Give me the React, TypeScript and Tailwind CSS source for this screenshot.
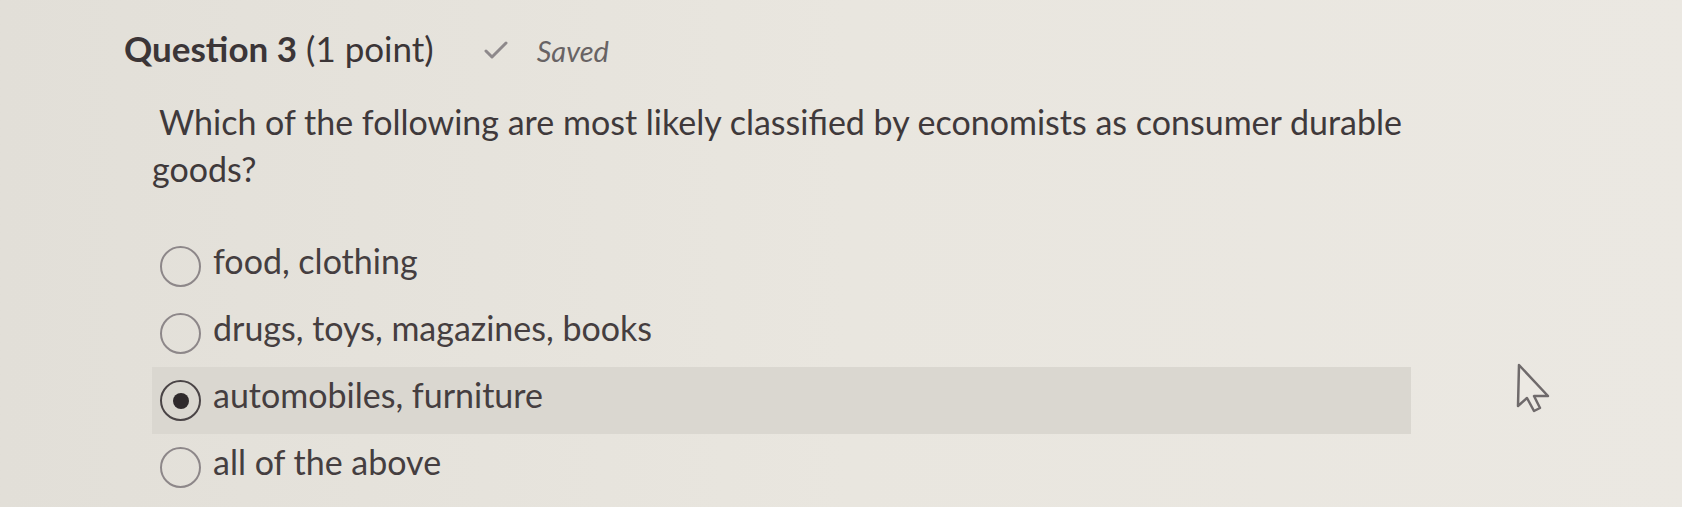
import { useState } from 'react'

const options = [
    'food, clothing',
    'drugs, toys, magazines, books',
    'automobiles, furniture',
    'all of the above',
]

function Radio({ checked }: { checked: boolean }) {
    return (
        <span
            className={
                'flex h-[41px] w-[41px] shrink-0 items-center justify-center rounded-full border-[2.5px] ' +
                (checked ? 'border-[#4a4446]' : 'border-[#8d8789]')
            }
        >
            {checked && <span className="h-[16px] w-[16px] rounded-full bg-[#2f2a2c]" />}
        </span>
    )
}

function Cursor() {
    return (
        <svg width="34" height="50" viewBox="0 0 34 50" className="absolute left-[1516px] top-[363px]">
            <path
                d="M3 2 L2 43 L11 35 L18 48 L24 45 L18 33 L32 33 Z"
                fill="#ece9e3"
                stroke="#6f6a6b"
                strokeWidth="2.5"
                strokeLinejoin="round"
            />
        </svg>
    )
}

export default function App() {
    const [selected, setSelected] = useState(2)

    return (
        <div className="relative h-[507px] w-full overflow-hidden bg-linear-to-r from-[#e2dfd8] via-[#e9e6df] to-[#ebe8e2] pl-[124px] pt-[31px] font-['Lato','Open_Sans',sans-serif] text-[#3b3537]">
            <div className="flex items-baseline text-[35px] leading-[35px]">
                <span className="font-bold">Question 3</span>
                <span className="ml-[9px]">(1 point)</span>
                <svg width="24" height="18" viewBox="0 0 24 18" className="ml-[50px] self-center">
                    <path d="M2 10 L8 16 L22 2" fill="none" stroke="#8e898b" strokeWidth="3" strokeLinecap="round" strokeLinejoin="round" />
                </svg>
                <span className="ml-[29px] text-[29px] italic text-[#686364]">Saved</span>
            </div>

            <p className="ml-[35px] mt-[30px] text-[34px] leading-[47px] text-[#3f393b]">
                Which of the following are most likely classified by economists as consumer durable
                <br />
                <span className="-ml-[7px]">goods?</span>
            </p>

            <div className="ml-[28px] mt-[41px] flex w-[1259px] flex-col">
                {options.map((opt, i) => (
                    <button
                        key={opt}
                        onClick={() => setSelected(i)}
                        className={
                            'flex h-[67px] items-center gap-[12px] pl-[8px] text-left ' +
                            (selected === i ? 'bg-[#dad7d0]' : '')
                        }
                    >
                        <Radio checked={selected === i} />
                        <span className="mb-[12px] text-[34px] leading-[40px] text-[#453e40]">{opt}</span>
                    </button>
                ))}
            </div>

            <Cursor />
        </div>
    )
}
